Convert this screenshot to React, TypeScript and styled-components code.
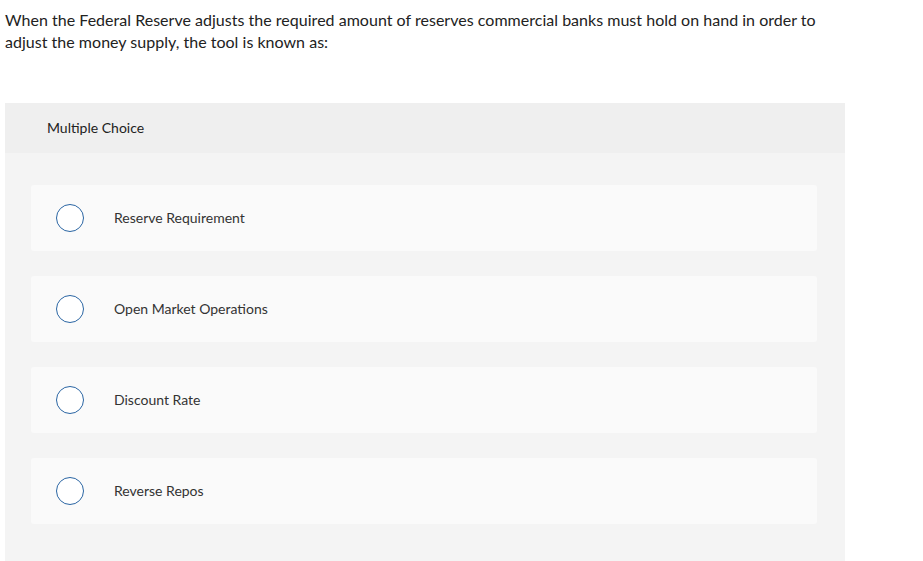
import React, { FC } from "react";
import styled, { createGlobalStyle } from "styled-components";

const GlobalStyle = createGlobalStyle`
  html, body {
    margin: 0;
    padding: 0;
    background: #ffffff;
    font-family: Lato, "Liberation Sans", sans-serif;
    color: #333333;
  }
`;

const options = [
  "Reserve Requirement",
  "Open Market Operations",
  "Discount Rate",
  "Reverse Repos",
];

const App: FC = () => {
  return (
    <Page>
      <GlobalStyle />
      <Question>
        When the Federal Reserve adjusts the required amount of reserves commercial banks must hold on hand in order to
        adjust the money supply, the tool is known as:
      </Question>
      <Panel>
        <PanelHeader>
          <HeaderLabel>Multiple Choice</HeaderLabel>
        </PanelHeader>
        <OptionList>
          {options.map((label) => (
            <Option key={label}>
              <Radio />
              <OptionLabel>{label}</OptionLabel>
            </Option>
          ))}
        </OptionList>
      </Panel>
    </Page>
  );
};

const Page = styled.div`
  width: 840px;
  padding: 9px 5px 0 5px;
`;

const Question = styled.div`
  font-size: 16px;
  line-height: 22px;
  letter-spacing: 0.02px;
  color: #222222;
  margin-bottom: 50px;
`;

const Panel = styled.div`
  background: #f4f4f4;
  min-height: 470px;
`;

const PanelHeader = styled.div`
  background: #efefef;
  height: 50px;
  display: flex;
  align-items: center;
  padding-left: 42px;
`;

const HeaderLabel = styled.span`
  font-size: 14px;
  line-height: 16px;
  padding-bottom: 1px;
  color: #222222;
`;

const OptionList = styled.div`
  display: flex;
  flex-direction: column;
  gap: 25px;
  padding: 32px 28px 40px 26px;
`;

const Option = styled.div`
  background: #fafafa;
  border-radius: 3px;
  height: 66px;
  display: flex;
  align-items: center;
  padding-left: 25px;
`;

const Radio = styled.span`
  width: 26px;
  height: 26px;
  border: 1.5px solid #2a65a3;
  border-radius: 50%;
  background: #ffffff;
  flex-shrink: 0;
`;

const OptionLabel = styled.span`
  margin-left: 30px;
  font-size: 14px;
  line-height: 16px;
  padding-bottom: 1px;
  color: #333333;
`;

export default App;
